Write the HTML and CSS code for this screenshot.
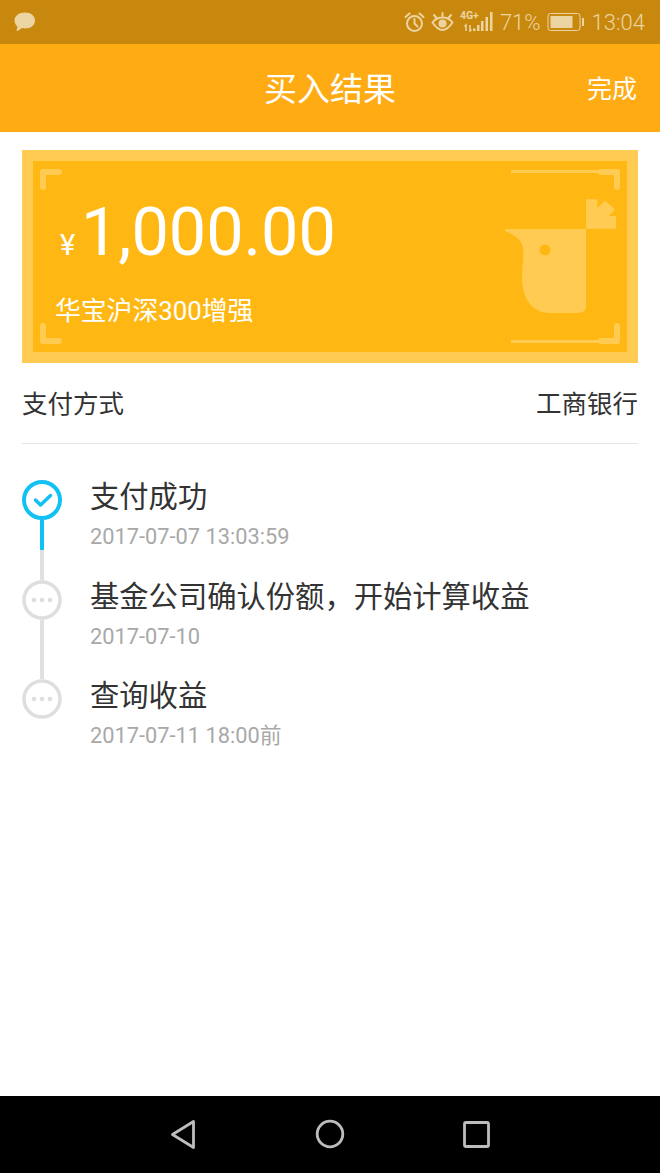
FILE: index.html
```html
<!DOCTYPE html>
<html lang="zh">
<head>
<meta charset="utf-8">
<title>买入结果</title>
<link rel="stylesheet" href="styles.css">
</head>
<body>
<div class="phone">
  <div class="status">
    <svg class="msg" width="24" height="24" viewBox="0 0 24 24"><path d="M12 2.500c6 0 10 3.400 10 8s-4 8-10 8c-1 0-2-.1-3-.4L4.500 21c-.6.300-1.100-.1-.9-.7l.9-3.600C2.900 15.200 1.500 13 1.500 10.500c0-4.600 4.500-8 10.500-8z"/></svg>
    <div class="status-right">
      <svg class="ic-alarm" width="21" height="22" viewBox="0 0 21 22"><circle cx="10.500" cy="12.500" r="7.500"/><path d="M10.500 8V12.500L13.500 15.500M1.500 6L5.500 2.500M19.500 6L15.500 2.500"/></svg>
      <svg class="ic-eye" width="23" height="22" viewBox="0 0 23 22"><path d="M1.500 11.500C4.500 7.500 7.500 6.500 11.500 6.500S18.500 7.500 21.500 11.500C18.500 16 15.500 19 11.500 19S4.500 16 1.500 11.500ZM3 4L5.500 7M11.500 2V5M20 4L17.500 7"/><circle class="fill" cx="11.500" cy="12.500" r="4"/></svg>
      <div class="net">
        <span class="net-label">4G+</span>
        <svg width="34" height="20" viewBox="0 0 34 20"><path d="M6 19V13L4.500 14.500M10 13V19L11.500 17.500"/><rect x="13" y="16.500" width="2.500" height="2.500"/><rect x="17" y="13" width="2.500" height="6"/><rect x="21" y="9" width="2.500" height="10"/><rect x="25.500" y="5" width="2.500" height="14"/><rect x="30" y="0" width="2.500" height="19"/></svg>
      </div>
      <span class="pct">71%</span>
      <svg class="ic-batt" width="38" height="18" viewBox="0 0 38 18"><rect class="shell" x="1" y=".5" width="32" height="17" rx="2.500"/><rect class="level" x="3.500" y="3" width="22" height="12"/><rect class="level" x="35" y="5" width="2" height="8"/></svg>
      <span class="time">13:04</span>
    </div>
  </div>

  <header class="nav">
    <h1 class="nav-title">买入结果</h1>
    <span class="nav-done">完成</span>
  </header>

  <main class="content">
    <section class="card">
      <i class="corner tl"></i><i class="corner tr"></i><i class="corner bl"></i><i class="corner br"></i>
      <i class="rule rule-top"></i><i class="rule rule-bottom"></i>
      <div class="amount"><span class="yen">¥</span><span class="num">1,000.00</span></div>
      <div class="fund">华宝沪深300增强</div>
      <svg class="bird" width="114" height="116" viewBox="0 0 114 116"><path d="M1 31H82V108C82 113 78 115 73 115H46C28 115 18 100 18 80C18 68 20 60 19 50C18 41 8 36 1 33Z"/><path d="M82 1.300H93.300V10.300L101 2.700L111 11.300L105 18H112V30.700H82Z"/><circle cx="41" cy="52" r="5.500" class="eye"/></svg>
    </section>

    <div class="pay">
      <span>支付方式</span>
      <span>工商银行</span>
    </div>

    <ol class="steps">
      <li class="step done">
        <div class="rail">
          <svg class="dot" width="40" height="40" viewBox="0 0 40 40"><circle cx="20" cy="20" r="18"/><path d="M13.500 20L18.500 25L28.500 15.500"/></svg>
          <div class="line"><i class="blue"></i><i class="gray"></i></div>
        </div>
        <div class="body">
          <div class="step-title">支付成功</div>
          <div class="step-date">2017-07-07 13:03:59</div>
        </div>
      </li>
      <li class="step">
        <div class="rail">
          <svg class="dot" width="40" height="40" viewBox="0 0 40 40"><circle cx="20" cy="20" r="18"/><circle class="pip" cx="12" cy="20" r="2.300"/><circle class="pip" cx="20" cy="20" r="2.300"/><circle class="pip" cx="28" cy="20" r="2.300"/></svg>
          <div class="line"><i class="gray"></i></div>
        </div>
        <div class="body">
          <div class="step-title">基金公司确认份额，开始计算收益</div>
          <div class="step-date">2017-07-10</div>
        </div>
      </li>
      <li class="step">
        <div class="rail">
          <svg class="dot" width="40" height="40" viewBox="0 0 40 40"><circle cx="20" cy="20" r="18"/><circle class="pip" cx="12" cy="20" r="2.300"/><circle class="pip" cx="20" cy="20" r="2.300"/><circle class="pip" cx="28" cy="20" r="2.300"/></svg>
        </div>
        <div class="body">
          <div class="step-title">查询收益</div>
          <div class="step-date">2017-07-11 18:00前</div>
        </div>
      </li>
    </ol>
  </main>

  <nav class="sysbar">
    <svg width="32" height="32" viewBox="0 0 32 32"><path d="M26.500 3.500V29.500L5.500 16.500Z"/></svg>
    <svg width="32" height="32" viewBox="0 0 32 32"><circle cx="16" cy="16" r="12.800"/></svg>
    <svg width="32" height="32" viewBox="0 0 32 32"><rect x="3.500" y="4.500" width="24" height="24" rx="1.500"/></svg>
  </nav>
</div>
</body>
</html>
```
FILE: styles.css
```css
* { box-sizing: border-box; }
html, body { margin: 0; padding: 0; background: #fff; }
.phone {
  width: 660px;
  height: 1173px;
  display: flex;
  flex-direction: column;
  overflow: hidden;
  font-family: Roboto, "Noto Sans CJK SC", sans-serif;
  color: #333;
}

.status {
  height: 44px;
  flex: none;
  background: #c8880d;
  color: #ecd4a2;
  display: flex;
  align-items: center;
  justify-content: space-between;
  padding: 0 15px 0 13px;
}
.msg { fill: #ecd4a2; }
.status-right { display: flex; align-items: center; }
.status-right svg { display: block; }
.ic-alarm, .ic-eye { fill: none; stroke: #ecd4a2; stroke-width: 2; stroke-linecap: round; }
.ic-alarm { margin-right: 6px; }
.ic-eye { margin-right: 6px; }
.ic-eye .fill { fill: #ecd4a2; stroke: none; }
.net { position: relative; width: 34px; height: 20px; }
.net-label {
  position: absolute;
  left: 0;
  top: -1px;
  font-size: 10.500px;
  line-height: 10px;
  font-weight: 700;
}
.net svg { fill: #ecd4a2; stroke: none; }
.net svg path { fill: none; stroke: #ecd4a2; stroke-width: 1.500; }
.pct { font-size: 22px; font-weight: 300; margin: 0 6px 0 6px; }
.ic-batt { margin-right: 7px; }
.ic-batt .shell { fill: none; stroke: #ecd4a2; }
.ic-batt .level { fill: #ecd4a2; }
.time { font-size: 22px; font-weight: 300; }

.nav {
  height: 88px;
  flex: none;
  background: #ffab13;
  color: #fff;
  display: flex;
  align-items: center;
  justify-content: center;
  padding-top: 2px;
  position: relative;
}
.nav-title { margin: 0; font-size: 33px; font-weight: 400; line-height: 1; }
.nav-done { position: absolute; right: 23px; top: 33px; font-size: 25px; line-height: 1; }

.content { flex: 1; padding: 18px 22px 0; }

.card {
  position: relative;
  height: 213px;
  background: #ffb813;
  border: 11px solid #ffcb52;
  color: #fff;
  padding: 28px 0 0 27px;
}
.corner { position: absolute; width: 22px; height: 21px; }
.corner::before, .corner::after {
  content: "";
  position: absolute;
  background: #ffcb52;
  border-radius: 3px;
}
.corner::before { left: 0; right: 0; height: 6px; }
.corner::after { top: 0; bottom: 0; width: 6px; }
.corner.tl { left: 7px; top: 8px; }
.corner.tr { right: 7px; top: 8px; }
.corner.bl { left: 7px; bottom: 8px; }
.corner.br { right: 7px; bottom: 8px; }
.corner.tl::before, .corner.tr::before { top: 0; }
.corner.bl::before, .corner.br::before { bottom: 0; }
.corner.tl::after, .corner.bl::after { left: 0; }
.corner.tr::after, .corner.br::after { right: 0; }
.rule { position: absolute; right: 28px; width: 88px; height: 3px; background: #ffcb52; }
.rule-top { top: 9px; }
.rule-bottom { bottom: 9px; }
.amount { display: flex; align-items: baseline; height: 86px; }
.yen { font-size: 29px; width: 25px; margin-right: -4px; line-height: 86px; }
.num { font-size: 66.500px; line-height: 86px; }
.fund { font-size: 25.800px; line-height: 36px; margin: 18px 0 0 -5px; }
.bird { position: absolute; left: 471px; top: 37px; }
.bird path { fill: #ffcb52; }
.bird .eye { fill: #ffb813; }

.pay {
  height: 81px;
  padding-bottom: 4px;
  display: flex;
  align-items: center;
  justify-content: space-between;
  font-size: 25.500px;
  border-bottom: 1px solid #e6e6e6;
}

.steps { list-style: none; margin: 0; padding: 36px 0 0; }
.step { display: flex; height: 99.500px; }
.rail { width: 40px; flex: none; display: flex; flex-direction: column; align-items: center; }
.dot { display: block; flex: none; fill: none; stroke: #dedede; stroke-width: 3.500; }
.dot .pip { fill: #dedede; stroke: none; }
.done .dot { stroke: #12c1f4; stroke-width: 4; }
.done .dot path { stroke-width: 3.500; stroke-linecap: round; stroke-linejoin: round; }
.line { width: 4px; flex: 1; display: flex; flex-direction: column; }
.line i { display: block; }
.line .gray { flex: 1; background: #e0e0e0; }
.line .blue { height: 30px; background: #12c1f4; }
.body { margin-left: 28px; }
.step-title { font-size: 29.300px; line-height: 38px; margin-top: -2px; color: #333; }
.step-date { font-size: 21.800px; line-height: 28px; margin-top: 7px; color: #a8a8a8; }

.sysbar {
  height: 77px;
  flex: none;
  background: #000;
  display: flex;
  align-items: center;
  justify-content: center;
  gap: 115px;
  padding-bottom: 1px;
}
.sysbar svg { display: block; fill: none; stroke: #bdbdbd; stroke-width: 2.800; stroke-linejoin: round; }
```
